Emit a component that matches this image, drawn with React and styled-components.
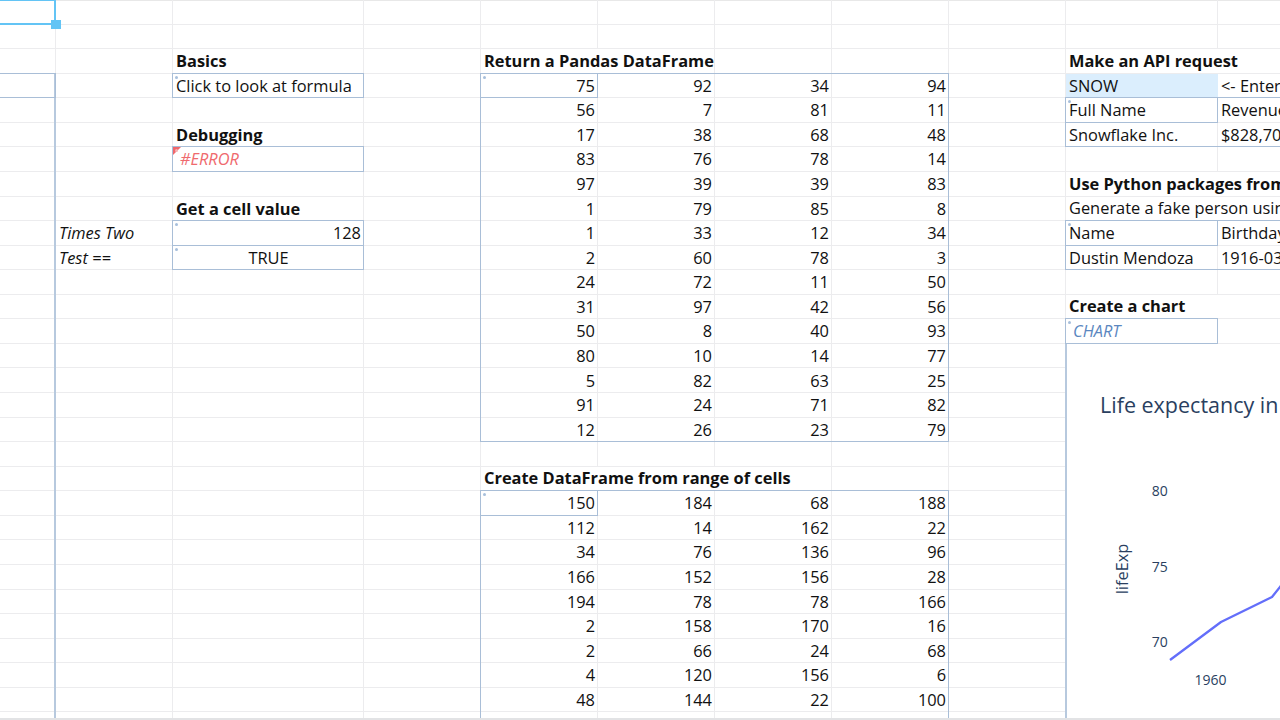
import React from 'react';
import styled, { createGlobalStyle, css } from 'styled-components';

const COLS = [117, 117, 191, 117, 117, 117, 117, 117, 117, 152, 117, 117];
const ROW_H = 24.57;
const ROWS = 31;

const GlobalStyle = createGlobalStyle`
  html, body { margin: 0; padding: 0; background: #fff; overflow: hidden; }
  body { font-family: "Open Sans", "Liberation Sans", sans-serif; }
`;

const Viewport = styled.div`
  width: 1280px;
  height: 720px;
  overflow: hidden;
  display: flex;
  flex-direction: column;
  background: #fff;
`;

const SheetArea = styled.div`
  flex: 1;
  min-height: 0;
  overflow: hidden;
  box-shadow: inset 0 1px 0 #e8e8e8;
`;

const BottomBar = styled.div`
  height: 2px;
  flex: none;
  background: #e2e3e5;
`;

const Stack = styled.div`
  display: grid;
  width: max-content;
  margin-left: -61px;
`;

const Layer = styled.div`
  grid-area: 1 / 1;
  display: grid;
  grid-template-columns: ${COLS.map((c) => c + 'px').join(' ')};
  grid-template-rows: repeat(${ROWS}, ${ROW_H}px);
  grid-auto-rows: ${ROW_H}px;
`;

const GridLine = styled.div`
  border-right: 1px solid #ececee;
  border-bottom: 1px solid #ececee;
`;

const place = css`
  grid-column: ${(p) => p.$col} / span ${(p) => p.$span || 1};
  grid-row: ${(p) => p.$row} / span ${(p) => p.$rows || 1};
`;

const Cell = styled.div`
  ${place}
  display: flex;
  align-items: center;
  justify-content: ${(p) =>
    p.$align === 'right' ? 'flex-end' : p.$align === 'center' ? 'center' : 'flex-start'};
  padding: 0 3px 0 ${(p) => (p.$indent ? '7px' : '3px')};
  min-width: 0;
  font-size: 16.4px;
  line-height: 1;
  font-weight: ${(p) => (p.$bold ? 700 : 400)};
  font-style: ${(p) => (p.$italic ? 'italic' : 'normal')};
  color: ${(p) => p.$color || '#111'};
  background: ${(p) => p.$bg || 'transparent'};
  white-space: nowrap;
  ${(p) =>
    p.$mask &&
    css`
      background: #fff;
      margin: 0 1px 1px 0;
    `}
`;

const Outline = styled.div`
  ${place}
  margin: -1px 0 0 -1px;
  border-style: solid;
  border-color: ${(p) => p.$tone || '#a9bed7'};
  border-width: ${(p) => p.$sides || '1px'};
  position: relative;
  pointer-events: none;
  ${(p) =>
    p.$error &&
    css`
      &::before {
        content: '';
        position: absolute;
        left: 0;
        top: 0;
        border-top: 8px solid #f0676b;
        border-right: 8px solid transparent;
      }
    `}
  ${(p) =>
    p.$dot &&
    css`
      &::after {
        content: '';
        position: absolute;
        left: 2px;
        top: 2px;
        width: 3px;
        height: 3px;
        border-radius: 50%;
        background: ${p.$error ? '#f7b3b5' : '#a7bfdb'};
      }
    `}
`;

const Cursor = styled.div`
  ${place}
  margin: -1px 0 0 -1px;
  border: 2px solid #63c4f5;
  position: relative;
  &::after {
    content: '';
    position: absolute;
    right: -7px;
    bottom: -6.5px;
    width: 10px;
    height: 9px;
    background: #63c4f5;
  }
`;

const ChartFrame = styled.div`
  ${place}
  margin-left: -1px;
  background: #fff;
  border-left: 2px solid #b7c9de;
  overflow: hidden;
`;

const ChartSvg = styled.svg`
  display: block;
  font-family: "Open Sans", "Liberation Sans", sans-serif;
  fill: #2a3f5f;
`;

const DF1 = [
  [75, 92, 34, 94], [56, 7, 81, 11], [17, 38, 68, 48], [83, 76, 78, 14], [97, 39, 39, 83],
  [1, 79, 85, 8], [1, 33, 12, 34], [2, 60, 78, 3], [24, 72, 11, 50], [31, 97, 42, 56],
  [50, 8, 40, 93], [80, 10, 14, 77], [5, 82, 63, 25], [91, 24, 71, 82], [12, 26, 23, 79],
];

const DF2 = [
  [150, 184, 68, 188], [112, 14, 162, 22], [34, 76, 136, 96], [166, 152, 156, 28],
  [194, 78, 78, 166], [2, 158, 170, 16], [2, 66, 24, 68], [4, 120, 156, 6],
  [48, 144, 22, 100], [60, 104, 84, 116],
];

function Frame({ data, row }) {
  return data.map((r, i) =>
    r.map((v, j) => (
      <Cell key={`${row}-${i}-${j}`} $col={5 + j} $row={row + i} $align="right">
        {v}
      </Cell>
    ))
  );
}

function LifeChart() {
  return (
    <ChartSvg width="386" height="420" viewBox="0 0 386 420">
      <text x="33" y="68.5" fontSize="21.5">Life expectancy in Canada</text>
      <text x="100.7" y="152" fontSize="14" textAnchor="end">80</text>
      <text x="100.7" y="227.7" fontSize="14" textAnchor="end">75</text>
      <text x="100.7" y="302.7" fontSize="14" textAnchor="end">70</text>
      <text x="60.5" y="225" fontSize="16.4" textAnchor="middle" transform="rotate(-90 60.5 225)">
        lifeExp
      </text>
      <text x="143.5" y="341" fontSize="14" textAnchor="middle">1960</text>
      <path
        d="M103 316 L154 278 L205 253 L213 243 L240 208 L290 170"
        fill="none"
        stroke="#636efa"
        strokeWidth="2.3"
        strokeLinejoin="round"
      />
    </ChartSvg>
  );
}

export default function App() {
  return (
    <>
      <GlobalStyle />
      <Viewport>
        <SheetArea>
          <Stack>
            <Layer aria-hidden="true">
              {Array.from({ length: ROWS * COLS.length }).map((_, i) => (
                <GridLine key={i} />
              ))}
            </Layer>
            <Layer>
              {/* Column C examples */}
              <Cell $col={3} $row={3} $bold>Basics</Cell>
              <Cell $col={3} $row={4}>Click to look at formula</Cell>
              <Cell $col={3} $row={6} $bold>Debugging</Cell>
              <Cell $col={3} $row={7} $italic $indent $color="#ef6a6e">#ERROR</Cell>
              <Cell $col={3} $row={9} $bold>Get a cell value</Cell>
              <Cell $col={2} $row={10} $italic>Times Two</Cell>
              <Cell $col={3} $row={10} $align="right">128</Cell>
              <Cell $col={2} $row={11} $italic>Test ==</Cell>
              <Cell $col={3} $row={11} $align="center">TRUE</Cell>

              {/* DataFrames */}
              <Cell $col={5} $row={3} $span={2} $bold $mask>Return a Pandas DataFrame</Cell>
              <Frame data={DF1} row={4} />
              <Cell $col={5} $row={20} $span={3} $bold $mask>Create DataFrame from range of cells</Cell>
              <Frame data={DF2} row={21} />

              {/* API request */}
              <Cell $col={10} $row={3} $span={2} $bold $mask>Make an API request</Cell>
              <Cell $col={10} $row={4} $bg="#dbeefd">SNOW</Cell>
              <Cell $col={11} $row={4}>&lt;- Enter a stock ticker</Cell>
              <Cell $col={10} $row={5}>Full Name</Cell>
              <Cell $col={11} $row={5}>Revenue</Cell>
              <Cell $col={10} $row={6}>Snowflake Inc.</Cell>
              <Cell $col={11} $row={6}>$828,705,000</Cell>

              {/* Python packages */}
              <Cell $col={10} $row={8} $span={2} $bold $mask>Use Python packages from PyPI</Cell>
              <Cell $col={10} $row={9} $span={2} $mask>Generate a fake person using Faker</Cell>
              <Cell $col={10} $row={10}>Name</Cell>
              <Cell $col={11} $row={10}>Birthday</Cell>
              <Cell $col={10} $row={11}>Dustin Mendoza</Cell>
              <Cell $col={11} $row={11}>1916-03-18</Cell>

              {/* Chart */}
              <Cell $col={10} $row={13} $span={2} $bold $mask>Create a chart</Cell>
              <Cell $col={10} $row={14} $italic $indent $color="#5b87bf">CHART</Cell>
              <ChartFrame $col={10} $row={15} $span={3} $rows={17}>
                <LifeChart />
              </ChartFrame>

              {/* Outlines */}
              <Outline $col={1} $row={4} $rows={28} $sides="0 2px 0 0" $tone="#b7c9de" />
              <Outline $col={1} $row={4} />
              <Outline $col={3} $row={4} $dot />
              <Outline $col={3} $row={7} $dot $error />
              <Outline $col={3} $row={10} $dot />
              <Outline $col={3} $row={11} $dot />
              <Outline $col={5} $row={4} $span={4} $rows={15} />
              <Outline $col={5} $row={4} $dot />
              <Outline $col={5} $row={21} $span={4} $rows={11} />
              <Outline $col={5} $row={21} $dot />
              <Outline $col={10} $row={5} $span={3} $rows={2} />
              <Outline $col={10} $row={5} $dot />
              <Outline $col={10} $row={10} $span={3} $rows={2} />
              <Outline $col={10} $row={10} $dot />
              <Outline $col={10} $row={14} $dot />

              <Cursor $col={1} $row={1} />
            </Layer>
          </Stack>
        </SheetArea>
        <BottomBar />
      </Viewport>
    </>
  );
}
